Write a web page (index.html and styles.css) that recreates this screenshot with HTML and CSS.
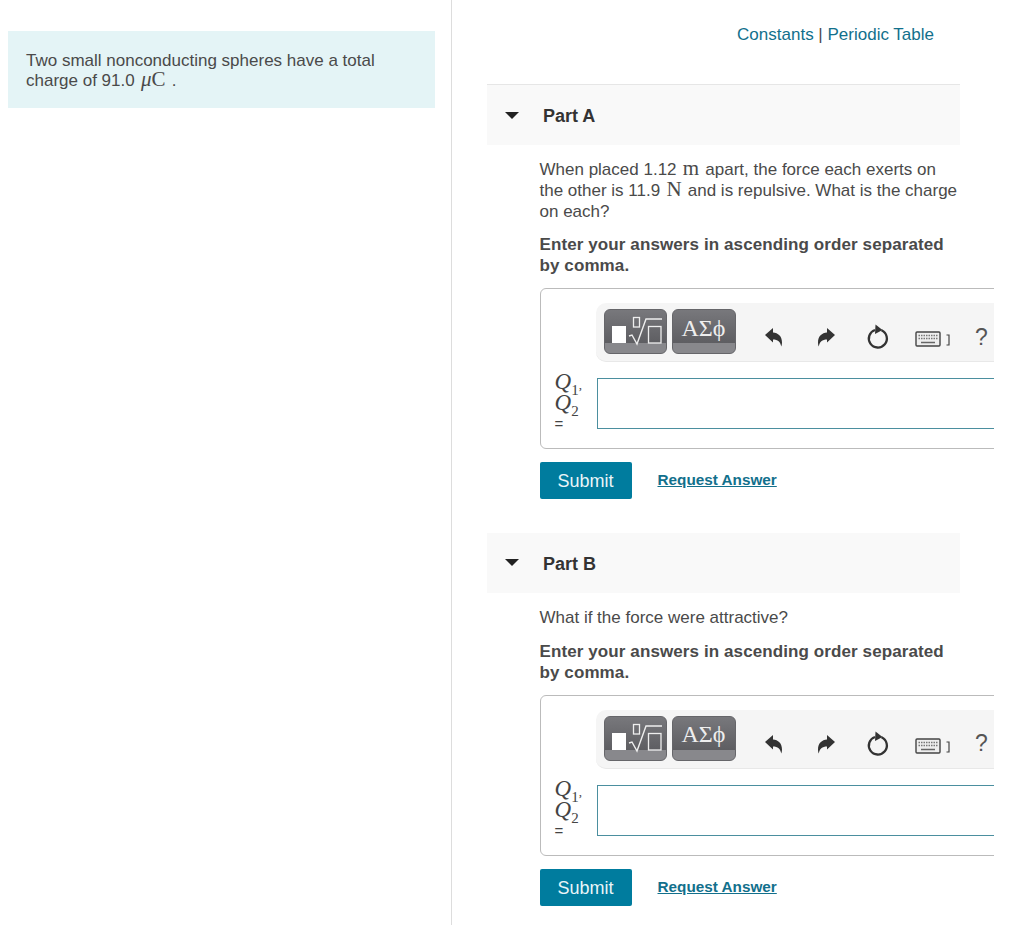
FILE: index.html
```html
<!DOCTYPE html>
<html lang="en">
<head>
  <meta charset="UTF-8">
  <title>Two small nonconducting spheres</title>
  <link rel="stylesheet" href="styles.css">
</head>
<body>
  <div class="page">
    <aside class="intro-col">
      <div class="intro">Two small nonconducting spheres have a total charge of 91.0 <span class="math"><i>μ</i>C</span> .</div>
    </aside>

    <main class="main-col">
      <div class="top-links"><a href="#">Constants</a> | <a href="#">Periodic Table</a></div>

      <section class="part part-first">
        <header class="part-head"><span class="caret"></span><h2>Part A</h2></header>
        <div class="part-body">
          <p>When placed 1.12 <span class="math">m</span> apart, the force each exerts on the other is 11.9 <span class="math">N</span> and is repulsive. What is the charge on each?</p>
          <p class="hint">Enter your answers in ascending order separated by comma.</p>
          <div class="answer">
            <div class="toolbar">
              <button class="tpl-btn" type="button">
                <svg width="61" height="43" viewBox="0 0 61 43">
                  <rect x="7" y="16" width="14" height="17" fill="#fff"/>
                  <rect x="28.500" y="7.500" width="6" height="9.500" fill="none" stroke="#eee" stroke-width="1.300"/>
                  <path d="M24 26l3 -1l5 9l9 -25h16" fill="none" stroke="#eee" stroke-width="1.400"/>
                  <rect x="43.500" y="16.500" width="12.500" height="16.500" fill="none" stroke="#eee" stroke-width="1.300"/>
                </svg>
              </button>
              <button class="tpl-btn sym-btn" type="button">ΑΣϕ</button>
              <span class="tool tool-first">
                <svg width="22" height="22" viewBox="0 0 22 22"><path d="M2 9l8 -7v4.500c5 .5 9 3.500 9 10c0 1.500 -.3 3 -.8 4c-.6 -4.500 -3.500 -7 -8.200 -7v3z" fill="#333"/></svg>
              </span>
              <span class="tool">
                <svg width="22" height="22" viewBox="0 0 22 22"><path d="M20 9l-8 -7v4.500c-5 .5 -9 3.500 -9 10c0 1.500 .3 3 .8 4c.6 -4.500 3.500 -7 8.200 -7v3z" fill="#333"/></svg>
              </span>
              <span class="tool">
                <svg width="24" height="26" viewBox="0 0 24 26"><path d="M9 6a9 9 0 1 0 6.500 .3" fill="none" stroke="#333" stroke-width="2.300"/><path d="M9.500 0.500l7 5.500l-7.500 4z" fill="#333"/></svg>
              </span>
              <span class="tool kbd-tool">
                <svg width="26" height="16" viewBox="0 0 26 16">
                  <rect x="1" y="1" width="24" height="14" rx="1" fill="#eee" stroke="#444" stroke-width="1.400"/>
                  <path d="M3.500 4.500h19M3.500 7.500h19" stroke="#777" stroke-width="1.500" stroke-dasharray="1.500 1"/>
                  <path d="M6 11.500h14" stroke="#666" stroke-width="1.500"/>
                </svg>
                <svg class="kbd-end" width="4" height="12" viewBox="0 0 4 12"><path d="M0.500 1h2.500v10h-2.500" fill="none" stroke="#444" stroke-width="1.200"/></svg>
              </span>
              <span class="tool help">?</span>
            </div>
            <div class="answer-row">
              <label class="answer-label"><span class="q"><i>Q</i><sub>1</sub><small>,</small></span><span class="q"><i>Q</i><sub>2</sub></span><span class="eq">=</span></label>
              <input class="answer-input" type="text">
            </div>
          </div>
          <div class="actions">
            <button class="submit" type="button">Submit</button>
            <a class="request" href="#">Request Answer</a>
          </div>
        </div>
      </section>

      <section class="part">
        <header class="part-head"><span class="caret"></span><h2>Part B</h2></header>
        <div class="part-body">
          <p>What if the force were attractive?</p>
          <p class="hint">Enter your answers in ascending order separated by comma.</p>
          <div class="answer">
            <div class="toolbar">
              <button class="tpl-btn" type="button">
                <svg width="61" height="43" viewBox="0 0 61 43">
                  <rect x="7" y="16" width="14" height="17" fill="#fff"/>
                  <rect x="28.500" y="7.500" width="6" height="9.500" fill="none" stroke="#eee" stroke-width="1.300"/>
                  <path d="M24 26l3 -1l5 9l9 -25h16" fill="none" stroke="#eee" stroke-width="1.400"/>
                  <rect x="43.500" y="16.500" width="12.500" height="16.500" fill="none" stroke="#eee" stroke-width="1.300"/>
                </svg>
              </button>
              <button class="tpl-btn sym-btn" type="button">ΑΣϕ</button>
              <span class="tool tool-first">
                <svg width="22" height="22" viewBox="0 0 22 22"><path d="M2 9l8 -7v4.500c5 .5 9 3.500 9 10c0 1.500 -.3 3 -.8 4c-.6 -4.500 -3.500 -7 -8.200 -7v3z" fill="#333"/></svg>
              </span>
              <span class="tool">
                <svg width="22" height="22" viewBox="0 0 22 22"><path d="M20 9l-8 -7v4.500c-5 .5 -9 3.500 -9 10c0 1.500 .3 3 .8 4c.6 -4.500 3.500 -7 8.200 -7v3z" fill="#333"/></svg>
              </span>
              <span class="tool">
                <svg width="24" height="26" viewBox="0 0 24 26"><path d="M9 6a9 9 0 1 0 6.500 .3" fill="none" stroke="#333" stroke-width="2.300"/><path d="M9.500 0.500l7 5.500l-7.500 4z" fill="#333"/></svg>
              </span>
              <span class="tool kbd-tool">
                <svg width="26" height="16" viewBox="0 0 26 16">
                  <rect x="1" y="1" width="24" height="14" rx="1" fill="#eee" stroke="#444" stroke-width="1.400"/>
                  <path d="M3.500 4.500h19M3.500 7.500h19" stroke="#777" stroke-width="1.500" stroke-dasharray="1.500 1"/>
                  <path d="M6 11.500h14" stroke="#666" stroke-width="1.500"/>
                </svg>
                <svg class="kbd-end" width="4" height="12" viewBox="0 0 4 12"><path d="M0.500 1h2.500v10h-2.500" fill="none" stroke="#444" stroke-width="1.200"/></svg>
              </span>
              <span class="tool help">?</span>
            </div>
            <div class="answer-row">
              <label class="answer-label"><span class="q"><i>Q</i><sub>1</sub><small>,</small></span><span class="q"><i>Q</i><sub>2</sub></span><span class="eq">=</span></label>
              <input class="answer-input" type="text">
            </div>
          </div>
          <div class="actions">
            <button class="submit" type="button">Submit</button>
            <a class="request" href="#">Request Answer</a>
          </div>
        </div>
      </section>
    </main>
  </div>
</body>
</html>
```

FILE: styles.css
```css
html, body {
  margin: 0;
  height: 100%;
  overflow: hidden;
}

body {
  font-family: "Liberation Sans", Arial, sans-serif;
  font-size: 17px;
  line-height: 20.8px;
  color: #4a4a4a;
  background: #fff;
}

.page {
  display: flex;
  height: 925px;
}

.intro-col {
  box-sizing: border-box;
  width: 452px;
  flex: none;
  padding: 31px 16px 0 8px;
  border-right: 1px solid #ddd;
}

.intro {
  height: 77px;
  box-sizing: border-box;
  padding: 19.600px 40px 0 18px;
  line-height: 20.500px;
  background: #e4f4f6;
}

.math {
  padding: 0 1.500px;
  font-family: "Liberation Serif", serif;
  font-size: 21px;
  line-height: 0;
}

.main-col {
  width: 542px;
  flex: none;
  overflow: hidden;
  padding: 25px 0 0 35px;
  box-sizing: border-box;
}

.top-links {
  width: 447px;
  text-align: right;
  height: 20px;
  margin-bottom: 39px;
}

.top-links a {
  color: #12708c;
  text-decoration: none;
}

.part {
  width: 473px;
  margin-top: 33.700px;
}

.part-first {
  margin-top: 0;
  border-top: 1px solid #e6e6e6;
}

.part-head {
  display: flex;
  align-items: center;
  height: 60px;
  background: #f9f9f9;
}

.part-head h2 {
  margin: 0;
  padding-top: 3px;
  font-size: 18px;
  font-weight: bold;
  color: #333;
}

.caret {
  width: 0;
  height: 0;
  margin: 0 24px 0 18px;
  border-left: 7.500px solid transparent;
  border-right: 7.500px solid transparent;
  border-top: 7px solid #222;
}

.part-body {
  margin-left: 52.500px;
}

.part-body p {
  width: 421px;
  margin: 15px 0 0;
}

.part-body .hint {
  margin-top: 13px;
  font-weight: bold;
  letter-spacing: 0.1px;
}

.answer {
  box-sizing: border-box;
  width: 520px;
  height: 161px;
  margin-top: 11.300px;
  padding: 14px 0 0 55px;
  border: 1px solid #bbb;
  border-radius: 6px;
}

.toolbar {
  display: flex;
  align-items: flex-start;
  gap: 5px;
  box-sizing: border-box;
  width: 460px;
  height: 59px;
  padding: 6px 0 0 8px;
  background: #f5f5f5;
  border-radius: 10px 0 0 10px;
  border-bottom: 1px solid #e8e8e8;
}

.tpl-btn {
  width: 63px;
  height: 45px;
  flex: none;
  padding: 0;
  border: 1px solid #66666a;
  border-radius: 6px;
  background: linear-gradient(#78787c, #5e5e62 76%, #88888c 76%);
}

.tpl-btn svg {
  display: block;
}

.sym-btn {
  width: 64px;
  padding-bottom: 7px;
  font-family: "Liberation Serif", serif;
  font-size: 24px;
  color: #eee;
}

.tool {
  display: flex;
  justify-content: center;
  align-items: center;
  width: 52px;
  height: 40px;
  margin: 8px -5px 0 0;
  flex: none;
}

.tool-first {
  margin-left: 7px;
}

.kbd-tool {
  gap: 5px;
  padding: 4px 0 0 5px;
  box-sizing: border-box;
}

.kbd-end {
  margin-top: 2px;
}

.help {
  font-size: 23px;
  color: #555;
  box-sizing: border-box;
}

.answer-row {
  display: flex;
  margin-top: 16px;
  margin-left: -41px;
}

.answer-label {
  display: flex;
  flex-direction: column;
  width: 42px;
  height: 62px;
  margin-top: -7px;
  flex: none;
  font-family: "Liberation Serif", serif;
  font-size: 23px;
  line-height: 21px;
  color: #444;
}

.q {
  display: block;
  height: 21px;
  white-space: nowrap;
}

.q sub {
  font-size: 15px;
  line-height: 0;
}

.q small {
  font-size: 13px;
}

.eq {
  font-family: "Liberation Sans", sans-serif;
  font-size: 15px;
}

.answer-input {
  box-sizing: border-box;
  width: 460px;
  height: 51px;
  padding: 0;
  border: 1px solid #4b8f9f;
  border-right: 0;
  background: #fff;
}

.actions {
  display: flex;
  align-items: center;
  margin-top: 13px;
}

.submit {
  width: 92px;
  height: 37px;
  padding: 2px 0 0;
  border: 0;
  border-radius: 2px;
  background: #007c9e;
  color: #eaf5f8;
  font-family: inherit;
  font-size: 18px;
}

.request {
  margin: 0 0 0 26px;
  color: #12708c;
  font-size: 15.300px;
  font-weight: bold;
}
```
